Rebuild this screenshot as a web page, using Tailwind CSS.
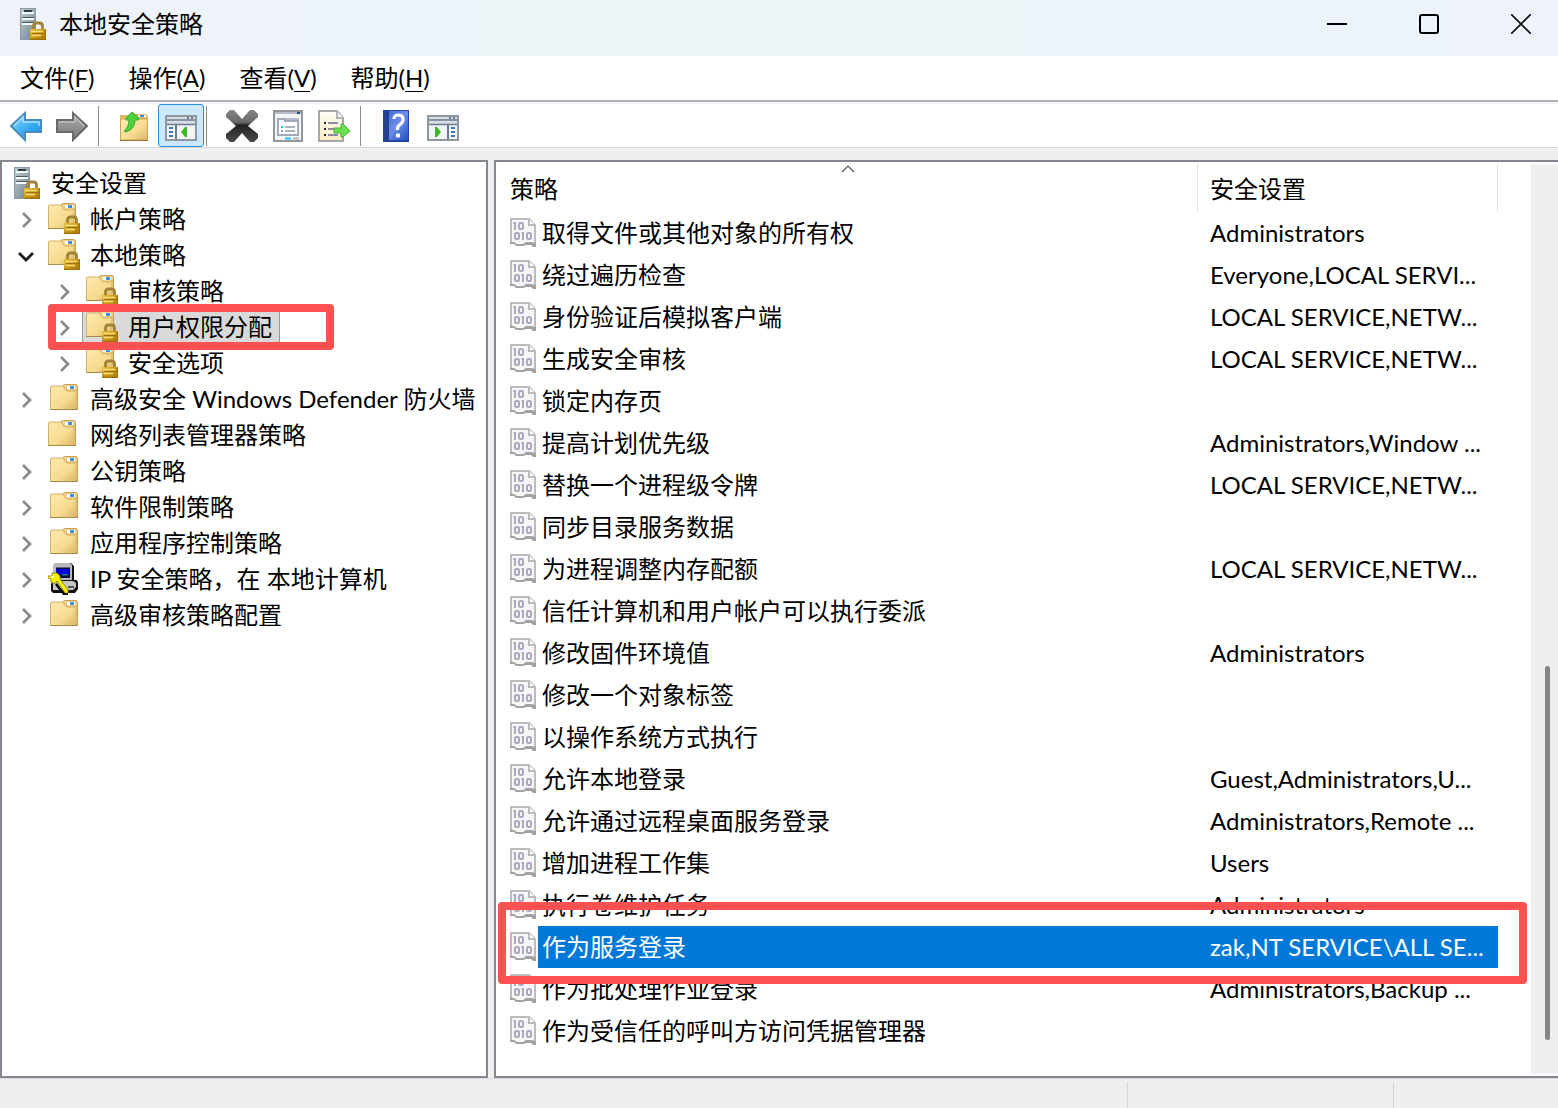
<!DOCTYPE html>
<html lang="zh-CN">
<head>
<meta charset="utf-8">
<meta name="viewport" content="width=device-width, initial-scale=1">
<title>本地安全策略</title>
<script src="https://cdn.jsdelivr.net/npm/@tailwindcss/browser@4"></script>
</head>
<body class="flex h-screen flex-col overflow-hidden bg-[#efefef] font-['Lato','Noto_Sans_CJK_SC',sans-serif] text-2xl text-black">

<!-- Shared icon shapes -->
<svg class="absolute h-0 w-0" aria-hidden="true">
  <defs>
    <linearGradient id="gFolder" x1="0" y1="0" x2="1" y2="1"><stop offset="0" stop-color="#ffeab0"/><stop offset=".6" stop-color="#f6db90"/><stop offset="1" stop-color="#d9b566"/></linearGradient>
    <linearGradient id="gServer" x1="0" y1="0" x2="1" y2="1"><stop offset="0" stop-color="#c3cfd6"/><stop offset="1" stop-color="#6f7e88"/></linearGradient>
    <linearGradient id="gLock" x1="0" y1="0" x2="1" y2="1"><stop offset="0" stop-color="#e8bd35"/><stop offset="1" stop-color="#a87400"/></linearGradient>
    <linearGradient id="gBlue" x1="0" y1="0" x2="1" y2="1"><stop offset="0" stop-color="#8bd8ff"/><stop offset=".6" stop-color="#36a8ee"/><stop offset="1" stop-color="#1590e6"/></linearGradient>
    <linearGradient id="gGray" x1="0" y1="0" x2="0" y2="1"><stop offset="0" stop-color="#aaaaaa"/><stop offset="1" stop-color="#787878"/></linearGradient>
    <linearGradient id="gCross" x1="0" y1="0" x2="0" y2="1"><stop offset="0" stop-color="#858585"/><stop offset=".38" stop-color="#6a6a6a"/><stop offset=".48" stop-color="#222"/><stop offset="1" stop-color="#4a4a4a"/></linearGradient>
    <linearGradient id="gHelp" x1="0" y1="0" x2="1" y2="1"><stop offset="0" stop-color="#3a63d4"/><stop offset=".5" stop-color="#6b8ee6"/><stop offset="1" stop-color="#2450c0"/></linearGradient>
    <linearGradient id="gPaper" x1="0" y1="0" x2="0" y2="1"><stop offset="0" stop-color="#fffdf5"/><stop offset="1" stop-color="#fbedc4"/></linearGradient>
  </defs>
  <symbol id="lock" viewBox="0 0 16 19">
    <path d="M3.500 9V5q0-3 3-3h3q3 0 3 3v4" fill="none" stroke="#a08339" stroke-width="2.800"/>
    <rect x="0" y="8" width="16" height="11" fill="url(#gLock)"/>
    <path d="M1 10.500h12M2 14.500h9" stroke="#f7dc7c" stroke-width="1.500"/>
    <path d="M0 18.300h16M2 12.500h13M15.500 8v11" stroke="#a0720c" stroke-width="1.200"/>
  </symbol>
  <symbol id="server" viewBox="0 0 28 33">
    <rect x="1" y="0" width="16" height="32" fill="url(#gServer)"/>
    <path d="M1 .5h16M1.500 0v32" stroke="#8d9ba4" stroke-width="1"/>
    <path d="M3 5h12M3 11h12M3 16h12" stroke="#f4fafa" stroke-width="2"/>
    <path d="M5 3h8" stroke="#2c3c43" stroke-width="2"/><path d="M3 9.500h12M3 14.500h12" stroke="#4a5a61" stroke-width="1"/>
    <use href="#lock" x="11" y="13" width="16" height="19"/>
  </symbol>
  <symbol id="folder" viewBox="0 0 28 26">
    <path d="M13 6V2.500Q13 .5 15.500.5h10q2 0 2 2V25H16Z" fill="#efd088" stroke="#c69d55"/>
    <path d="M17 2h8v3h-8z" fill="#fff"/><path d="M20 2h4v3h-4z" fill="#3a91ea"/>
    <path d="M.5 25.500V3Q.5 2 2 2h10q2 0 3 3 .5 2 3 2h6q2 0 2-2v20.500Z" fill="url(#gFolder)" stroke="#d8b062"/>
    <path d="M0 25.500h28" stroke="#a98a4c"/>
  </symbol>
  <symbol id="i-folder" viewBox="0 0 32 32"><use href="#folder" x="2" y="1" width="28" height="26"/></symbol>
  <symbol id="i-folder0" viewBox="0 0 32 32"><use href="#folder" x="0" y="1" width="28" height="26"/></symbol>
  <symbol id="i-folderlock" viewBox="0 0 32 32"><use href="#folder" x="0" y="0" width="28" height="26"/><use href="#lock" x="16" y="12" width="16" height="19"/></symbol>
  <symbol id="i-ip" viewBox="0 0 32 32">
    <path d="M7 0h16l3 3v14h3l1 3v6l-3 4H5l-2-2v-7l2-4Z" fill="#111"/>
    <path d="M5 2l2-2h15l2 2v15H5Z" fill="#b9b9b9"/><path d="M8 6h13v9H8Z" fill="#0000d8"/><path d="M8 6V4.500h14V15h-1V6ZM10 12h11v3H10Z" fill="#000b3d"/><path d="M14 11h6v1.500h-6Z" fill="#108080"/>
    <path d="M5 18h20l3 2v4l-3 3H5Z" fill="#c4c4c4"/><path d="M20 24h6" stroke="#555" stroke-width="2"/>
    <path d="M8 21l8 10h4" stroke="#000" stroke-width="2.500" fill="none"/><path d="M4 10h5l3 3v3l8 11v3h-3L9 18l-1 2H5l-2-1v-3l-3-1v-2h4Z" fill="#f8f000" stroke="#8a8400" stroke-width=".8"/><path d="M3 14h3" stroke="#fff" stroke-width="1.500"/>
  </symbol>
  <symbol id="i-policy" viewBox="0 0 26 30">
    <path d="M1 25V1h18l6 6v19" fill="#f6f6f6" stroke="#bcbcbc" stroke-width="2"/>
    <path d="M19 1v6h6" fill="#fff" stroke="#bcbcbc" stroke-width="2"/>
    <path d="M0 24h4l3 2h6l3-2h5l5 1v4h-3l-2-2h-5l-3 1H6l-2-2H0Z" fill="#a2a2a2"/>
    <g fill="none" stroke="#aba9c2" stroke-width="2"><path d="M5 4v8M3.500 5H5M13 14v8M11.500 15H13"/><rect x="9" y="5" width="4" height="6" rx="1.500"/><rect x="5" y="15" width="4" height="6" rx="1.500"/><rect x="17" y="15" width="4" height="6" rx="1.500"/></g>
  </symbol>
</svg>

<header class="flex h-14 shrink-0 items-center bg-linear-to-r from-[#eef3fa] via-[#ebf4f7] to-[#eef3fb] pl-[19px]">
  <svg class="mr-3 mb-2 h-[33px] w-7 shrink-0" aria-hidden="true"><use href="#server"/></svg>
  <h1 class="-mt-2 flex-1 leading-8">本地安全策略</h1>
  <div class="-mr-[9px] -mt-2 flex">
    <button class="grid h-12 w-[92px] place-items-center" aria-label="最小化"><svg class="h-5 w-5" viewBox="0 0 20 20"><path d="M0 10h20" stroke="#000" stroke-width="2"/></svg></button>
    <button class="grid h-12 w-[92px] place-items-center" aria-label="最大化"><svg class="h-5 w-5" viewBox="0 0 20 20"><rect x="1" y="1" width="18" height="18" rx="2" fill="none" stroke="#000" stroke-width="2"/></svg></button>
    <button class="grid h-12 w-[92px] place-items-center" aria-label="关闭"><svg class="h-5 w-5" viewBox="0 0 20 20"><path d="M0 0l20 20M20 0L0 20" stroke="#111" stroke-width="1.600"/></svg></button>
  </div>
</header>

<nav class="flex h-[46px] shrink-0 items-center gap-[34px] border-b-2 border-[#b0b3b6] bg-white pl-5 leading-8" aria-label="菜单">
  <button>文件(<span class="underline decoration-1 underline-offset-4">F</span>)</button>
  <button>操作(<span class="underline decoration-1 underline-offset-4">A</span>)</button>
  <button>查看(<span class="underline decoration-1 underline-offset-4">V</span>)</button>
  <button>帮助(<span class="underline decoration-1 underline-offset-4">H</span>)</button>
</nav>

<div class="flex h-[46px] shrink-0 items-center border-t-2 border-b border-t-[#f3f6fa] border-b-[#d9d9d9] bg-white pl-[3px]" role="toolbar" aria-label="工具栏">
  <button class="grid h-10 w-[46px] place-items-center" aria-label="后退"><svg class="h-8 w-8" viewBox="0 0 32 32"><path d="M1 16L15 3v7h16v12H15v8Z" fill="url(#gBlue)" stroke="#4a8dbd" stroke-width="2"/><path d="M4 16l9-9v5h16v4" fill="none" stroke="#a8e2ff" stroke-width="1.500"/></svg></button>
  <button class="grid h-10 w-[46px] place-items-center" aria-label="前进"><svg class="h-8 w-8" viewBox="0 0 32 32"><path d="M31 16L17 3v7H1v12h16v8Z" fill="url(#gGray)" stroke="#6a6a6a" stroke-width="2"/><path d="M3 12h16V7l9 9" fill="none" stroke="#bdbdbd" stroke-width="1.500"/></svg></button>
  <span class="mr-3 ml-[3px] h-10 w-px bg-[#8c8c8c]"></span>
  <button class="grid h-10 w-[46px] place-items-center" aria-label="上移一级"><svg class="h-8 w-8" viewBox="0 0 32 32"><path d="M2 8V5h11l2-1h13l2 2v25H2Z" fill="#e3b968"/><path d="M2.500 9h27v21h-27Z" fill="url(#gFolder)" stroke="#cda35a"/><path d="M20 5h8v2h-8Z" fill="#fff"/><path d="M22 5h4v2h-4Z" fill="#3a91ea"/><path d="M2 30.500h28" stroke="#97783f"/><path d="M14 2l7 6-1 2h-3q0 9-9 12l-2-1q5-4 5-11H8V8Z" fill="#4fd13c" stroke="#35a72b"/></svg></button>
  <button class="ml-px grid h-[43px] w-[46px] place-items-center rounded-[3px] border border-[#2b8ddb] bg-[#cce8ff]" aria-label="显示/隐藏控制台树" aria-pressed="true"><svg class="mt-1 h-[26px] w-8" viewBox="0 0 32 26"><rect x="1" y="1" width="30" height="24" fill="#f3f4f6" stroke="#8f979e" stroke-width="2"/><path d="M2 2h28v8H2Z" fill="#d9dee3"/><path d="M2 5h28M2 9.500h28" stroke="#6b7a92" stroke-width="1.500"/><path d="M22 3h2M26 3h2" stroke="#6b7a92" stroke-width="2"/><path d="M11 10v14" stroke="#6b7a92" stroke-width="2"/><path d="M4 13h4M4 17h4M4 21h4" stroke="#3975c0" stroke-width="2"/><path d="M22 12v10h-2l-4-5 4-5Z" fill="#41b528"/></svg></button>
  <span class="mr-3 ml-[2px] h-10 w-px bg-[#8c8c8c]"></span>
  <button class="grid h-10 w-[46px] place-items-center" aria-label="删除"><svg class="h-8 w-8" viewBox="0 0 32 32"><path d="M4 0h4l8 9 8-9h4l4 4v3l-10 9 10 8v4l-4 4h-4l-8-9-8 9H4l-4-4v-4l10-8L0 7V4Z" fill="url(#gCross)"/></svg></button>
  <button class="grid h-10 w-[46px] place-items-center" aria-label="属性"><svg class="h-8 w-[30px]" viewBox="0 0 30 32"><rect x="1" y="1" width="28" height="30" fill="#f3f4f6" stroke="#92979e" stroke-width="2"/><path d="M2 3h26" stroke="#b4bdc8" stroke-width="2"/><path d="M24 3h3" stroke="#2b4b78" stroke-width="2"/><path d="M5 9h7v2h13v14H5Z" fill="#fff" stroke="#a3a8bb" stroke-width="2"/><path d="M12 9h6v2M19 9h6v2" stroke="#a3a8bb" stroke-width="1.500" fill="none"/><path d="M8 17h2M12 28.500h6" stroke="#12c8f5" stroke-width="2"/><path d="M12 17h10M12 21h10M20 28.500h6" stroke="#adb3ba" stroke-width="2"/><path d="M8 21h2" stroke="#8996a8" stroke-width="2"/></svg></button>
  <button class="grid h-10 w-[46px] place-items-center" aria-label="导出列表"><svg class="h-8 w-8" viewBox="0 0 32 32"><path d="M1 1h18l6 7v23H1Z" fill="url(#gPaper)" stroke="#a5a5a5" stroke-width="2"/><path d="M19 1v7h6" fill="#fff" stroke="#b4b4b4" stroke-width="2"/><path d="M6 13h2M6 19h2M6 25h2" stroke="#222" stroke-width="2"/><path d="M10 13h10M10 19h6M10 25h10" stroke="#9089a6" stroke-width="2"/><path d="M16 18h7v-4h2l7 7-7 6h-2v-4h-7Z" fill="#6ae052" stroke="#3eb52b"/></svg></button>
  <span class="mr-3 ml-[3px] h-10 w-px bg-[#8c8c8c]"></span>
  <button class="grid h-10 w-[46px] place-items-center" aria-label="帮助"><svg class="h-8 w-[26px] overflow-visible" viewBox="0 0 26 32"><rect width="26" height="32" fill="#2344a7"/><path d="M1 1h24v29H1Z" fill="url(#gHelp)"/><path d="M1 1h5v30H1Z" fill="#23418f"/><path d="M11 9q0-4 4.500-4t4.500 4.500q0 3-3 5t-2.500 5.500" fill="none" stroke="#fff" stroke-width="3.200"/><rect x="13" y="23.500" width="4" height="4" rx="1" fill="#fff"/></svg></button>
  <button class="ml-px grid h-10 w-[46px] place-items-center" aria-label="显示/隐藏操作窗格"><svg class="mt-1 h-[26px] w-8" viewBox="0 0 32 26"><rect x="1" y="1" width="30" height="24" fill="#f3f4f6" stroke="#8f979e" stroke-width="2"/><path d="M2 2h28v8H2Z" fill="#d9dee3"/><path d="M2 5h28M2 9.500h28" stroke="#6b7a92" stroke-width="1.500"/><path d="M22 3h2M26 3h2" stroke="#6b7a92" stroke-width="2"/><path d="M21 10v14" stroke="#6b7a92" stroke-width="2"/><path d="M24 13h4M24 17h4M24 21h4" stroke="#3975c0" stroke-width="2"/><path d="M8 12v10h2l4-5-4-5Z" fill="#41b528"/></svg></button>
</div>

<main class="mt-3 flex min-h-0 flex-1 gap-[6px]">
  <nav class="w-[488px] shrink-0 overflow-hidden border-2 border-[#828790] bg-white pt-[3px]" aria-label="控制台树">
    <div class="flex h-9 items-center gap-[10px] pl-[11px] leading-8 whitespace-nowrap"><svg class="h-[33px] w-7 shrink-0" aria-hidden="true"><use href="#server"/></svg>安全设置</div>
    <ul id="tree"></ul>
  </nav>

  <section class="flex min-w-0 flex-1 border-y-2 border-l-2 border-[#828790] bg-white" aria-label="策略列表">
    <div class="relative min-w-0 flex-1 pr-[33px]">
      <table class="w-full table-fixed border-collapse">
        <colgroup><col><col class="w-[300px]"></colgroup>
        <thead>
          <tr class="h-[50px] text-left leading-8">
            <th class="relative p-0 pt-1 pl-[14px] font-normal">策略
              <svg class="absolute top-[2px] left-1/2 -ml-[6px] h-[9px] w-[14px]" viewBox="0 0 14 9" aria-hidden="true"><path d="M1 8l6-6 6 6" fill="none" stroke="#555" stroke-width="1.200"/></svg>
              <span class="absolute top-[2px] right-0 bottom-0 w-px bg-[#e2e2e2]"></span>
            </th>
            <th class="relative p-0 pt-1 pl-3 font-normal">安全设置<span class="absolute top-[2px] right-0 bottom-0 w-px bg-[#e2e2e2]"></span></th>
          </tr>
        </thead>
        <tbody id="policies"></tbody>
      </table>
    </div>
    <div class="my-[2px] flex w-[27px] shrink-0 flex-col items-end bg-[#efefef] pt-[502px] pr-2 pb-[34px]"><span class="w-[5px] flex-1 rounded-full bg-[#858585]"></span></div>
  </section>
</main>

<footer class="flex h-[30px] shrink-0 justify-end border-t border-[#dcdcdc] pt-[3px]">
  <span class="w-[266px] border-l border-[#d4d4d4]"></span>
  <span class="w-[165px] border-l border-[#d4d4d4]"></span>
</footer>

<script>
  // label, level, icon, state, selected
  const nodes = [
    ['帐户策略', 1, 'i-folderlock', 'closed'],
    ['本地策略', 1, 'i-folderlock', 'open'],
    ['审核策略', 2, 'i-folderlock', 'closed'],
    ['用户权限分配', 2, 'i-folderlock', 'closed', true],
    ['安全选项', 2, 'i-folderlock', 'closed'],
    ['高级安全 Windows Defender 防火墙', 1, 'i-folder', 'closed'],
    ['网络列表管理器策略', 1, 'i-folder0', 'leaf'],
    ['公钥策略', 1, 'i-folder', 'closed'],
    ['软件限制策略', 1, 'i-folder', 'closed'],
    ['应用程序控制策略', 1, 'i-folder', 'closed'],
    ['IP 安全策略，在 本地计算机', 1, 'i-ip', 'closed'],
    ['高级审核策略配置', 1, 'i-folder', 'closed'],
  ];
  const chevrons = {
    closed: '<path d="M9 6l7 7-7 7" fill="none" stroke="#8a8a8a" stroke-width="2.600"/>',
    open: '<path d="M5 10l7 7 7-7" fill="none" stroke="#1c1c1c" stroke-width="2.800"/>',
  };
  document.getElementById('tree').innerHTML = nodes.map(([label, level, icon, state, selected]) => `
    <li class="relative flex h-9 items-center gap-[6px] leading-8 whitespace-nowrap ${level === 2 ? 'pl-[50px]' : 'pl-3'}">
      ${state === 'leaf' ? '<span class="w-6 shrink-0"></span>' : `<button class="h-6 w-6 shrink-0" aria-label="${label}" aria-expanded="${state === 'open'}"><svg class="h-6 w-6" viewBox="0 0 24 24">${chevrons[state]}</svg></button>`}
      <a href="#" class="flex h-9 items-center gap-[10px] pr-[7px] ${selected ? 'border-x border-[#999] bg-[#d9d9d9] pl-[3px]' : 'pl-1'}"><svg class="h-8 w-8 shrink-0" aria-hidden="true"><use href="#${icon}"/></svg>${label}</a>
      ${selected ? '<span class="pointer-events-none absolute -inset-y-[5px] left-[46px] z-10 w-[286px] rounded-[4px] border-8 border-[#fb5151]"></span>' : ''}
    </li>`).join('');

  const policies = [
    ['取得文件或其他对象的所有权', 'Administrators'],
    ['绕过遍历检查', 'Everyone,LOCAL SERVI...'],
    ['身份验证后模拟客户端', 'LOCAL SERVICE,NETW...'],
    ['生成安全审核', 'LOCAL SERVICE,NETW...'],
    ['锁定内存页', ''],
    ['提高计划优先级', 'Administrators,Window ...'],
    ['替换一个进程级令牌', 'LOCAL SERVICE,NETW...'],
    ['同步目录服务数据', ''],
    ['为进程调整内存配额', 'LOCAL SERVICE,NETW...'],
    ['信任计算机和用户帐户可以执行委派', ''],
    ['修改固件环境值', 'Administrators'],
    ['修改一个对象标签', ''],
    ['以操作系统方式执行', ''],
    ['允许本地登录', 'Guest,Administrators,U...'],
    ['允许通过远程桌面服务登录', 'Administrators,Remote ...'],
    ['增加进程工作集', 'Users'],
    ['执行卷维护任务', 'Administrators'],
    ['作为服务登录', 'zak,NT SERVICE\\ALL SE...', true],
    ['作为批处理作业登录', 'Administrators,Backup ...'],
    ['作为受信任的呼叫方访问凭据管理器', ''],
  ];
  document.getElementById('policies').innerHTML = policies.map(([name, value, selected]) => `
    <tr class="relative h-[42px] whitespace-nowrap ${selected ? 'text-white' : ''}">
      <td class="p-0 pl-[14px]"><div class="flex items-center"><svg class="mr-[2px] h-[30px] w-[26px] shrink-0" aria-hidden="true"><use href="#i-policy"/></svg><span class="h-[42px] flex-1 pl-1 leading-[42px] ${selected ? 'bg-[#0078d7]' : ''}">${name}</span></div></td>
      <td class="p-0 pl-3 leading-[42px] ${selected ? 'bg-[#0078d7]' : ''}">${value}${selected ? '<span class="pointer-events-none absolute -top-6 -right-[29px] -bottom-4 left-[2px] z-10 rounded-[4px] border-8 border-[#fb5151]"></span>' : ''}</td>
    </tr>`).join('');
</script>
</body>
</html>
